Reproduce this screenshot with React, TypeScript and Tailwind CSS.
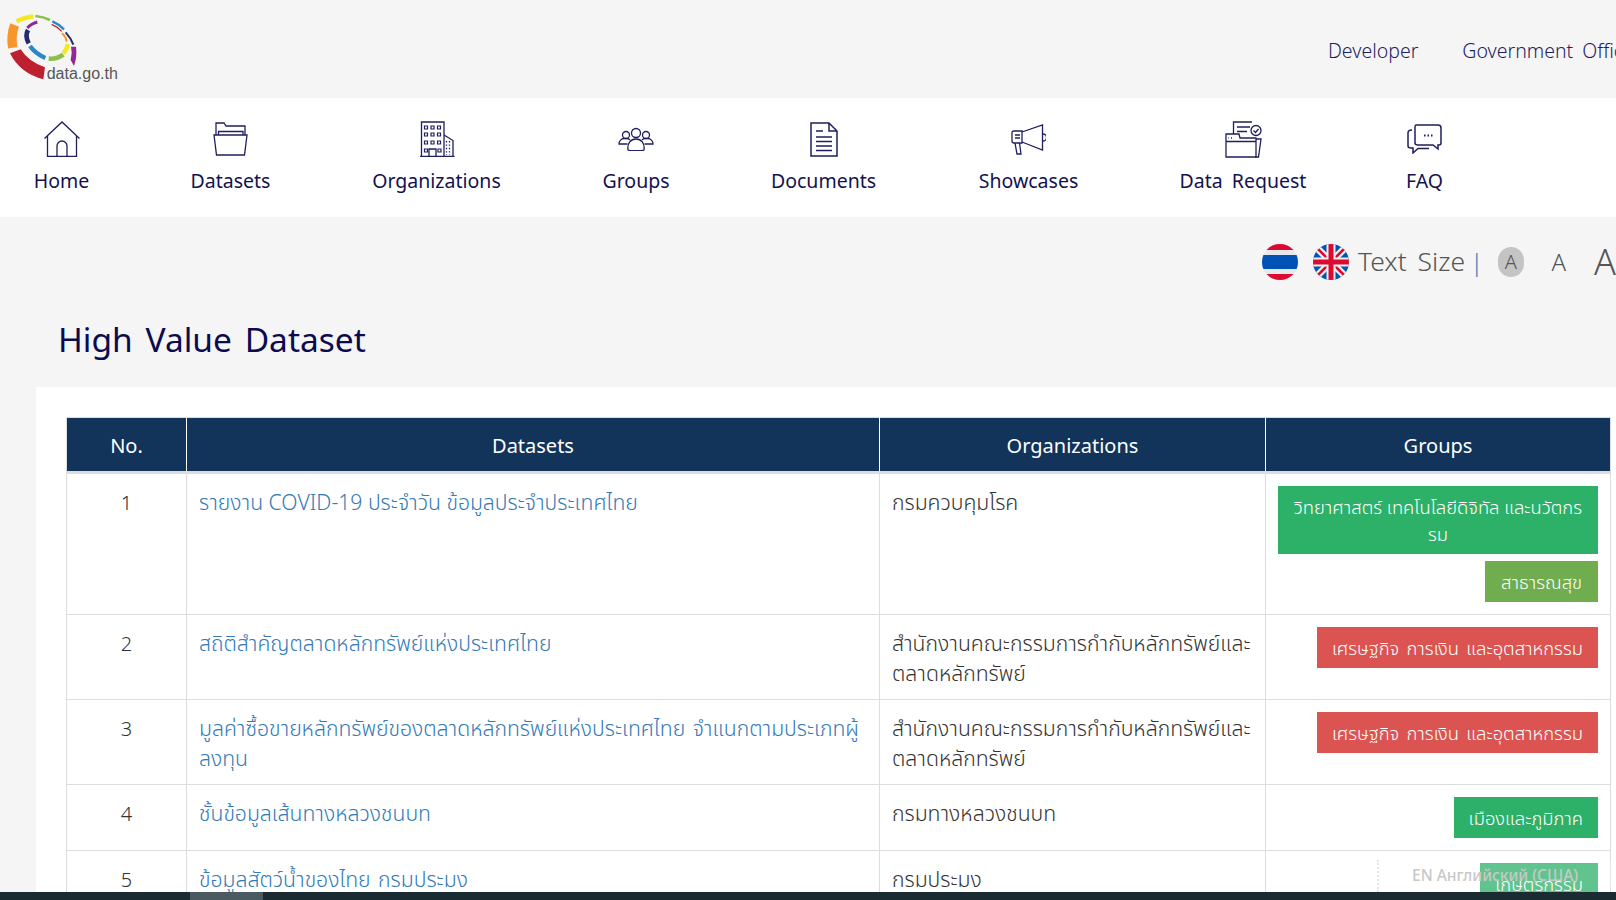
import type { ReactNode } from 'react'

const ink = '#1f1f5e'

function Icon({ w, h, children }: { w: number; h: number; children: ReactNode }) {
  return (
    <svg width={w} height={h} viewBox={`0 0 ${w} ${h}`} fill="none" stroke={ink} strokeWidth="1.3">
      {children}
    </svg>
  )
}

const navItems: { label: string; width: string; icon: ReactNode }[] = [
  {
    label: 'Home',
    width: 'w-[55px]',
    icon: (
      <Icon w={36} h={36}>
        <path d="M0.5 17.5 18 1 35.5 17.5M3.5 15V35.5H32.5V15" />
        <path d="M13 35.5V25a5 5 0 0 1 10 0V35.5" />
      </Icon>
    ),
  },
  {
    label: 'Datasets',
    width: 'w-[79px]',
    icon: (
      <Icon w={35} h={34}>
        <path d="M3 13V1H11L13 4H32V13" />
        <path d="M5.5 13V9.5H30V13" />
        <path d="M1 13H34L31.5 33H3.5Z" />
      </Icon>
    ),
  },
  {
    label: 'Organizations',
    width: 'w-[129px]',
    icon: (
      <Icon w={36} h={36}>
        <path d="M1 35.5H35.5M2.5 35.5V1H25V35.5M25 14 34 19.5V35.5" />
        <path d="M10 35.5V28H17V35.5" />
        <path
          strokeWidth="1.2"
          d="M5.5 5h3v3h-3zM12 5h3v3h-3zM18.5 5h3v3h-3zM5.5 12h3v3h-3zM12 12h3v3h-3zM18.5 12h3v3h-3zM5.5 20h3v3h-3zM12 20h3v3h-3zM18.5 20h3v3h-3zM5.5 28h3v3h-3zM19 28h3v3h-3z"
        />
        <path strokeDasharray="1.4 2" d="M27.5 20V34M30.5 20V34" />
      </Icon>
    ),
  },
  {
    label: 'Groups',
    width: 'w-[66px]',
    icon: (
      <Icon w={36} h={24}>
        <circle cx="18" cy="6" r="4.5" />
        <circle cx="8" cy="8" r="3.5" />
        <circle cx="28" cy="8" r="3.5" />
        <path d="M10 23c-1-7 3-11 8-11s9 4 8 11c-1 1-15 1-16 0Z" />
        <path d="M9.5 17H1c0-3 2.500-5.500 5-5.500h4l2 1.500M26.500 17H35c0-3-2.500-5.500-5-5.500h-4l-2 1.500" />
      </Icon>
    ),
  },
  {
    label: 'Documents',
    width: 'w-[105px]',
    icon: (
      <Icon w={28} h={35}>
        <path strokeWidth="1.5" d="M1 1H19L27 9V34H1ZM19 1V9H27" />
        <path strokeWidth="1.5" d="M6 9H13M6 15H22M6 19.500H22M6 24H22M6 28.500H22" />
      </Icon>
    ),
  },
  {
    label: 'Showcases',
    width: 'w-[101px]',
    icon: (
      <Icon w={35} h={31}>
        <path d="M11 7H3Q1 7 1 9V17Q1 19 3 19H11ZM11 8 31.500 1V26L11 18" />
        <path d="M4 19 6 30H10L8.500 19" />
        <path d="M32 10a3.500 3.500 0 0 1 0 7M4 11H9M4 14H9" />
      </Icon>
    ),
  },
  {
    label: 'Data Request',
    width: 'w-[124px]',
    icon: (
      <Icon w={37} h={37}>
        <path d="M8.500 13V1H27M8.500 5" />
        <path d="M12 6H25M12 10.500H22" />
        <circle cx="31" cy="9.500" r="5" />
        <path d="M28.500 9.500 30.500 11.500 33.500 8" />
        <path d="M1 36V13H14L15 17H31V36ZM1 20.500H31M3.500 17H4M6 17H7" />
        <path d="M31 18H36L33.500 36H30" />
      </Icon>
    ),
  },
  {
    label: 'FAQ',
    width: 'w-[35px]',
    icon: (
      <Icon w={35} h={30}>
        <path
          strokeWidth="1.5"
          d="M9 1H31Q34 1 34 4V19Q34 21 32 21H31V25L26 21H11Q8 21 8 19V3Q8 1 9 1Z"
        />
        <path strokeWidth="1.5" d="M5 6Q1 6 1 9V22Q1 24 4 24H6V29L11 24.500H22" />
        <path strokeWidth="1.8" d="M17 11.500H18.500M20.500 11.500H22M24 11.500H25.500" />
      </Icon>
    ),
  },
]

// Logo: ring of coloured segments, traced from the picture
function Logo() {
  return (
    <svg width="140" height="95" viewBox="0 0 420 285" fill="none" className="shrink-0 self-start">
      <path d="M44 75Q32 105 38 143" stroke="#f7962b" strokeWidth="28" />
      <path d="M50 64Q72 52 100 49" stroke="#f4e81e" strokeWidth="13" />
      <path d="M106 48Q130 50 150 60" stroke="#8cc04b" strokeWidth="8" />
      <path d="M157 64Q178 73 192 88" stroke="#2a87c8" strokeWidth="7" />
      <path d="M197 97Q212 113 220 134" stroke="#252a6b" strokeWidth="6" />
      <path d="M213 140 228 140Q232 170 222 198L212 180Q218 160 213 140Z" fill="#93298f" />
      <path d="M30 160 62 148Q85 185 135 202L130 238Q60 220 30 160Z" fill="#bd202e" />
      <path d="M82 84Q92 72 112 66" stroke="#93298f" strokeWidth="9" />
      <path d="M84 90Q74 108 86 130" stroke="#252a6b" strokeWidth="14" />
      <path d="M90 138Q105 160 136 174" stroke="#2a87c8" strokeWidth="13" />
      <path d="M146 176Q170 178 190 164" stroke="#8cc04b" strokeWidth="14" />
      <path d="M190 160Q202 148 203 132" stroke="#f4e81e" strokeWidth="13" />
      <path d="M186 100Q198 110 200 125" stroke="#f7962b" strokeWidth="6" />
      <path d="M155 73Q172 80 185 94" stroke="#bd202e" strokeWidth="4" />
      <text
        x="140"
        y="236"
        fill="#555555"
        fontSize="48"
        fontFamily="'Liberation Sans', sans-serif"
      >
        data.go.th
      </text>
    </svg>
  )
}

function ThaiFlag() {
  return (
    <svg width="36" height="36" viewBox="0 0 36 36" className="shrink-0">
      <clipPath id="thai-clip">
        <circle cx="18" cy="18" r="18" />
      </clipPath>
      <g clipPath="url(#thai-clip)">
        <rect width="36" height="36" fill="#e4e9ee" />
        <rect width="36" height="6" fill="#dc0a30" />
        <rect y="30" width="36" height="6" fill="#dc0a30" />
        <rect y="11" width="36" height="14" fill="#0052b4" />
      </g>
    </svg>
  )
}

function UkFlag() {
  return (
    <svg width="36" height="36" viewBox="0 0 36 36" className="shrink-0">
      <clipPath id="uk-clip">
        <circle cx="18" cy="18" r="18" />
      </clipPath>
      <g clipPath="url(#uk-clip)">
        <rect width="36" height="36" fill="#0052b4" />
        <path d="M3 3 33 33M33 3 3 33" stroke="#f0f0f0" strokeWidth="7" />
        <path d="M4 4 15 15M32 4 21 15M4 32 15 21M32 32 21 21" stroke="#dc0a30" strokeWidth="2.500" />
        <path d="M18 0V36M0 18H36" stroke="#f0f0f0" strokeWidth="9" />
        <path d="M18 0V36M0 18H36" stroke="#dc0a30" strokeWidth="5" />
      </g>
    </svg>
  )
}

function Label({ color, children }: { color: string; children: ReactNode }) {
  return (
    <span className={`float-right clear-both mb-[7px] py-[7px] text-center text-[18.4px] leading-[27px] font-light text-white ${color}`}>
      {children}
    </span>
  )
}

const green = 'bg-[#2db068] px-[15px]'
const greenWide = 'bg-[#2db068] px-[16px]'
const olive = 'bg-[#6fad4f] px-[16px]'
const red = 'bg-[#db5451] px-[15px] [word-spacing:2.5px]'

const rows: { no: number; height: string; name: ReactNode; org: ReactNode; groups: ReactNode }[] = [
  {
    no: 1,
    height: 'h-[139px]',
    name: <span className="[word-spacing:0px]">รายงาน COVID-19 ประจำวัน ข้อมูลประจำประเทศไทย</span>,
    org: 'กรมควบคุมโรค',
    groups: (
      <>
        <Label color={greenWide}>
          <span className="[word-spacing:0px]">วิทยาศาสตร์ เทคโนโลยีดิจิทัล และนวัตกร</span>
          <br />
          รม
        </Label>
        <Label color={olive}>สาธารณสุข</Label>
      </>
    ),
  },
  {
    no: 2,
    height: 'h-[85px]',
    name: 'สถิติสำคัญตลาดหลักทรัพย์แห่งประเทศไทย',
    org: (
      <>
        สำนักงานคณะกรรมการกำกับหลักทรัพย์และ
        <br />
        ตลาดหลักทรัพย์
      </>
    ),
    groups: <Label color={red}>เศรษฐกิจ การเงิน และอุตสาหกรรม</Label>,
  },
  {
    no: 3,
    height: 'h-[85px]',
    name: (
      <>
        มูลค่าซื้อขายหลักทรัพย์ของตลาดหลักทรัพย์แห่งประเทศไทย จำแนกตามประเภทผู้
        <br />
        ลงทุน
      </>
    ),
    org: (
      <>
        สำนักงานคณะกรรมการกำกับหลักทรัพย์และ
        <br />
        ตลาดหลักทรัพย์
      </>
    ),
    groups: <Label color={red}>เศรษฐกิจ การเงิน และอุตสาหกรรม</Label>,
  },
  {
    no: 4,
    height: 'h-[66px]',
    name: 'ชั้นข้อมูลเส้นทางหลวงชนบท',
    org: 'กรมทางหลวงชนบท',
    groups: <Label color={green}>เมืองและภูมิภาค</Label>,
  },
  {
    no: 5,
    height: 'h-[66px]',
    name: 'ข้อมูลสัตว์น้ำของไทย กรมประมง',
    org: 'กรมประมง',
    groups: <Label color={green}>เกษตรกรรม</Label>,
  },
]

export default function App() {
  return (
    <div className="relative h-[900px] w-[1616px] overflow-hidden bg-[#f5f5f5] font-['Noto_Sans','Noto_Sans_Thai','Open_Sans',sans-serif] text-[20px] [word-spacing:4px] text-[#333333]">
      {/* top bar */}
      <header className="flex h-[98px] items-center whitespace-nowrap text-[19.5px] font-light text-[#1f1f5e]">
        <Logo />
        <a className="ml-[1188px] pt-[4px]">Developer</a>
        <a className="ml-[44px] pt-[4px]">Government Officer</a>
      </header>

      {/* main nav */}
      <nav className="flex h-[119px] gap-[102px] bg-white pl-[34px] pt-[23px] text-[19.5px] text-[#12124f]">
        {navItems.map((item) => (
          <a key={item.label} className={`flex shrink-0 flex-col items-center whitespace-nowrap ${item.width}`}>
            <span className="flex h-[36px] items-center">{item.icon}</span>
            <span className="mt-[9px] leading-[30px]">{item.label}</span>
          </a>
        ))}
      </nav>

      {/* language and text size */}
      <div className="flex h-[62px] items-center whitespace-nowrap pl-[1262px] pt-[28px] font-light text-[#555555]">
        <ThaiFlag />
        <span className="ml-[15px]">
          <UkFlag />
        </span>
        <span className="ml-[9px] text-[26.5px]">Text Size</span>
        <span className="ml-[5px] text-[24px] text-[#337ab7]">|</span>
        <span className="ml-[15px] flex h-[30px] w-[30px] items-center justify-center rounded-full bg-[#c4c4c4]">A</span>
        <span className="ml-[28px] text-[24px]">A</span>
        <span className="ml-[28px] text-[36px]">A</span>
      </div>

      <h1 className="ml-[58px] mt-[40px] h-[68px] text-[33.5px] leading-[40px] font-normal text-[#0b0b50]">High Value Dataset</h1>

      {/* table panel */}
      <main className="ml-[36px] bg-white pl-[30px] pt-[30px] font-light">
        <table className="w-[1544px] table-fixed border-collapse border border-[#dddddd]">
          <colgroup>
            <col className="w-[120px]" />
            <col className="w-[693px]" />
            <col className="w-[386px]" />
            <col className="w-[345px]" />
          </colgroup>
          <thead>
            <tr className="h-[55px] border-b-[3px] border-[#dddddd] bg-[#12345a] text-white">
              <th className="border-r border-white pt-[3px] font-normal">No.</th>
              <th className="border-r border-white pt-[3px] font-normal">Datasets</th>
              <th className="border-r border-white pt-[3px] font-normal">Organizations</th>
              <th className="pt-[3px] font-normal">Groups</th>
            </tr>
          </thead>
          <tbody>
            {rows.map((row) => (
              <tr key={row.no} className={`${row.height} border-b border-[#dddddd]`}>
                <td className="border-r border-[#dddddd] px-[12px] pb-[8px] pt-[14px] text-center align-top leading-[30px]">{row.no}</td>
                <td className="border-r border-[#dddddd] px-[12px] pb-[8px] pt-[13px] align-top text-[21.2px] leading-[30px] [word-spacing:2px] whitespace-nowrap text-[#337ab7]">{row.name}</td>
                <td className="border-r border-[#dddddd] px-[12px] pb-[8px] pt-[13px] align-top text-[21.2px] leading-[30px] whitespace-nowrap">{row.org}</td>
                <td className="p-[12px] pb-[5px] align-top whitespace-nowrap">{row.groups}</td>
              </tr>
            ))}
          </tbody>
        </table>
      </main>

      {/* translate popup showing through at the bottom */}
      <div className="absolute bottom-[8px] left-[1377px] flex h-[32px] w-[239px] items-center border-l-2 border-dotted border-[#e5e5e5] bg-white/25 pl-[33px] text-[15.5px] font-medium whitespace-nowrap text-[#c8c8c8] [word-spacing:0px]">
        EN Английский (США)
      </div>

      {/* horizontal scrollbar */}
      <div className="absolute bottom-0 left-0 h-[8px] w-full bg-[#1b2b32]">
        <div className="ml-[190px] h-full w-[73px] bg-[#4b5a60]" />
      </div>
    </div>
  )
}
